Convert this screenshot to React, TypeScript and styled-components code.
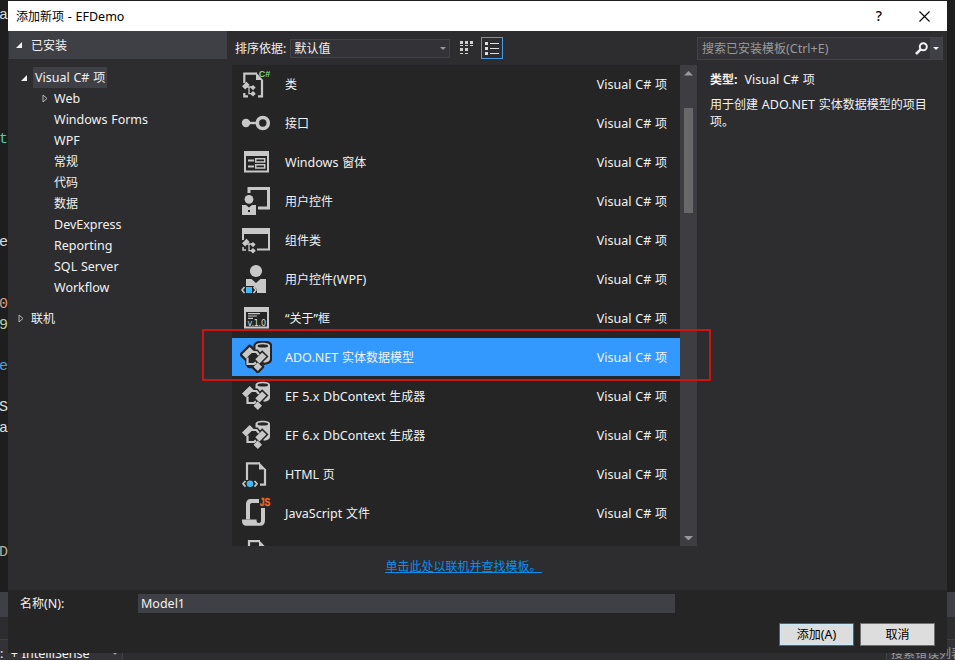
import React from "react";
import styled, { createGlobalStyle } from "styled-components";

const GlobalStyle = createGlobalStyle`
  * { box-sizing: border-box; }
  body {
    margin: 0;
    overflow: hidden;
    background: #1e1e1e;
    font-family: "Noto Sans", "Noto Sans CJK SC", sans-serif;
    font-size: 12px;
    color: #f1f1f1;
  }
`;

/* ---------- mixed-script text ---------- */

const Run = styled.span`
  white-space: pre;
`;
const Latin = styled.span`
  font-family: "Noto Sans", sans-serif;
  font-size: 12.5px;
  word-spacing: 0.5px;
  line-height: 1;
  white-space: pre;
`;
const Han = styled.span`
  font-family: "Noto Sans CJK SC", sans-serif;
  font-size: 12px;
  line-height: 1;
`;

function Label({ text }: { text: string }) {
  const parts = text.match(/[\u2e80-\uffef]+|[^\u2e80-\uffef]+/g) ?? [];
  return (
    <Run>
      {parts.map((p, i) =>
        /[\u2e80-\uffef]/.test(p) ? <Han key={i}>{p}</Han> : <Latin key={i}>{p}</Latin>
      )}
    </Run>
  );
}

/* ---------- editor behind the dialog ---------- */

const Screen = styled.div`
  position: relative;
  width: 955px;
  height: 660px;
  overflow: hidden;
  background: #1e1e1e;
  display: flex;
  flex-direction: column;
`;
const Editor = styled.div`
  height: 592px;
  padding-top: 6px;
  overflow: hidden;
`;
const CodeLine = styled.div<{ $color?: string }>`
  height: 20.65px;
  line-height: 20.65px;
  width: 8px;
  display: flex;
  justify-content: flex-end;
  font-family: "Liberation Mono", monospace;
  font-size: 15px;
  color: ${(p) => p.$color ?? "#dcdcdc"};
`;
const PaneHeader = styled.div`
  height: 25px;
  background: #3f3f46;
`;
const PaneToolbar = styled.div`
  height: 23px;
  background: #2d2d30;
  border-bottom: 1px solid #3f3f46;
`;
const PaneFilter = styled.div`
  flex: 1;
  display: flex;
  justify-content: space-between;
  background: #2d2d30;
  overflow: hidden;
`;
const FilterBox = styled.div<{ $w: number; $dim?: boolean }>`
  width: ${(p) => p.$w}px;
  height: 24px;
  display: flex;
  align-items: center;
  justify-content: space-between;
  padding: 2px 4px 0 ${(p) => (p.$dim ? 4 : 0)}px;
  overflow: hidden;
  background: #333337;
  border: solid #434346;
  border-width: ${(p) => (p.$dim ? "0 0 0 1px" : "0 1px 0 0")};
  color: ${(p) => (p.$dim ? "#999" : "#f1f1f1")};
`;

const CODE: Record<number, [string, string?]> = {
  0: ["a"],
  6: ["t", "#4ec9b0"],
  11: ["e"],
  14: ["0", "#d69d85"],
  15: ["9", "#b5cea8"],
  17: ["e", "#569cd6"],
  19: ["S"],
  20: ["a"],
  26: ["D", "#b0b09c"],
};

/* ---------- dialog ---------- */

const Dialog = styled.div`
  position: absolute;
  left: 8px;
  top: 1px;
  width: 939px;
  height: 652px;
  background: #2d2d30;
  display: flex;
  flex-direction: column;
`;
const TitleBar = styled.div`
  height: 30px;
  flex: none;
  display: flex;
  align-items: center;
  padding: 0 17px 0 8px;
  background: #fff;
  color: #000;
`;
const TitleText = styled.div`
  flex: 1;
`;
const HelpMark = styled.div`
  width: 12px;
  margin-right: 34px;
  padding-bottom: 2px;
  font: 500 14px "Noto Sans", sans-serif;
  text-align: center;
`;
const Body = styled.div`
  height: 559px;
  display: flex;
`;
const Sidebar = styled.div`
  width: 224px;
  padding-left: 1px;
`;
const SideHeader = styled.div`
  width: 218px;
  height: 28px;
  display: flex;
  align-items: center;
  gap: 9px;
  padding-left: 7px;
  background: #3f3f46;
`;
const Tree = styled.div`
  padding-top: 8px;
`;
const Node = styled.div<{ $indent: number; $gap?: number }>`
  height: 21px;
  margin-top: ${(p) => p.$gap ?? 0}px;
  padding-left: ${(p) => p.$indent}px;
  display: flex;
  align-items: center;
`;
const Twisty = styled.svg<{ $gap?: number }>`
  display: block;
  flex: none;
  margin-right: ${(p) => p.$gap ?? 0}px;
`;
const NodeText = styled.div<{ $active?: boolean }>`
  height: 21px;
  display: flex;
  align-items: center;
  padding: 0 2px;
  background: ${(p) => (p.$active ? "#3f3f46" : "transparent")};
`;

const Center = styled.div`
  width: 465px;
  display: flex;
  flex-direction: column;
`;
const SortBar = styled.div`
  height: 34px;
  display: flex;
  align-items: center;
  padding-left: 3px;
`;
const SortSelect = styled.div`
  width: 160px;
  height: 19px;
  margin: 1px 6px 0 4px;
  padding: 0 3px 0 3px;
  display: flex;
  align-items: center;
  justify-content: space-between;
  background: #333337;
  border: 1px solid #434346;
`;
const ViewButton = styled.div<{ $active?: boolean }>`
  width: 22px;
  height: 22px;
  margin-right: 3px;
  display: flex;
  align-items: center;
  justify-content: center;
  border: 1px solid ${(p) => (p.$active ? "#4a9be8" : "transparent")};
`;
const ListFrame = styled.div`
  height: 481px;
  display: flex;
  background: #252526;
`;
const List = styled.div`
  width: 448px;
  overflow: hidden;
`;
const Item = styled.div<{ $active?: boolean }>`
  height: 38px;
  margin-bottom: 1px;
  padding: 0 13px 0 8px;
  display: flex;
  align-items: center;
  background: ${(p) => (p.$active ? "#3399ff" : "transparent")};
`;
const Icon = styled.svg`
  width: 32px;
  height: 32px;
  flex: none;
  margin-right: 13px;
`;
const ItemName = styled.div`
  flex: 1;
`;
const ScrollBar = styled.div`
  width: 17px;
  display: flex;
  flex-direction: column;
  align-items: center;
  justify-content: space-between;
  padding: 6px 0;
  background: #3e3e42;
`;
const ScrollTrack = styled.div`
  flex: 1;
  width: 9px;
  padding-top: 32px;
`;
const ScrollThumb = styled.div`
  height: 105px;
  background: #686868;
`;
const OnlineLink = styled.a`
  align-self: center;
  margin: 12px 2px 0 0;
  height: 15px;
  line-height: 15px;
  color: #0e8ee9;
  border-bottom: 1px solid #0e8ee9;
  font-family: "Noto Sans CJK SC", sans-serif;
`;

const Details = styled.div`
  flex: 1;
`;
const SearchBox = styled.div`
  width: 246px;
  height: 23px;
  margin-top: 6px;
  display: flex;
  align-items: center;
  background: #333337;
  border: 1px solid #434346;
  color: #999;
`;
const SearchText = styled.div`
  flex: 1;
  padding-left: 4px;
`;
const SearchDrop = styled.div`
  width: 12px;
  height: 21px;
  margin-left: 2px;
  display: flex;
  align-items: center;
  justify-content: center;
  background: #3f3f46;
`;
const TypeLine = styled.div`
  margin: 10px 0 0 13px;
  height: 18px;
  display: flex;
  align-items: center;
  gap: 7px;
`;
const TypeKey = styled.div`
  font-weight: 700;
`;
const Description = styled.div`
  margin: 8px 0 0 13px;
`;
const DescLine = styled.div`
  height: 17px;
  display: flex;
  align-items: center;
`;

const Footer = styled.div`
  flex: 1;
  background: #252526;
  display: flex;
  flex-direction: column;
`;
const NameRow = styled.div`
  display: flex;
  align-items: center;
  padding: 4px 0 0 12px;
`;
const NameLabel = styled.div`
  width: 118px;
`;
const NameField = styled.div`
  width: 537px;
  height: 19px;
  display: flex;
  align-items: center;
  padding-left: 3px;
  background: #3f3f46;
`;
const Actions = styled.div`
  display: flex;
  justify-content: flex-end;
  gap: 6px;
  padding: 10px 12px 0 0;
`;
const Button = styled.button<{ $primary?: boolean }>`
  width: 75px;
  height: 23px;
  padding: 0;
  border: 1px solid ${(p) => (p.$primary ? "#0078d7" : "#707070")};
  background: #dddddd;
  box-shadow: ${(p) => (p.$primary ? "inset 0 0 0 1px #c9e8f8" : "none")};
  color: #000;
  line-height: 1;
`;
const Highlight = styled.div`
  position: absolute;
  left: 202px;
  top: 329px;
  width: 509px;
  height: 52px;
  border: 2px solid #cb1414;
`;

/* ---------- icons ---------- */

const G = "#c8c8c8";

const ClassShape = ({ dy = 0 }: { dy?: number }) => (
  <g transform={`translate(0 ${dy})`} fill={G}>
    <path d="M2 19.800 6.500 15.300l3.200 3.200L5.200 23z" />
    <path d="M13 18.500l2.600 2.600-2.600 2.600-2.600-2.600zM13 24.500l2.800 2.800-2.800 2.800-2.800-2.800z" />
    <path d="M7 20.500h5M9 20.500v6.700h3" fill="none" stroke={G} strokeWidth="1.300" />
  </g>
);

const modelBoxes = (
  <>
    <path d="M2 13.600 9.700 5.900l4 4L6 17.600z" />
    <path d="M15.300 18.300l6.900-6.900 4.200 4.200-6.900 6.900z" />
    <path d="M13.500 25.700l4.200-4.200 4.300 4.300-4.200 4.200z" />
  </>
);
const modelLinks = <path d="M11 11h5.500l2.500 3M7.500 16.500v6.500h6.500l2-1.500" fill="none" />;
const cylinder = (
  <path d="M15.500 4.700C15.500 3 18.700 1.700 22.800 1.700S30 3 30 4.700V18c0 2-2.500 3.300-6 3.700L15.500 13z" />
);

const Model = ({ outlined }: { outlined?: boolean }) => (
  <>
    {outlined && (
      <g fill="#252526" stroke="#252526" strokeWidth="4.400" strokeLinejoin="round">
        {cylinder}
        {modelBoxes}
        {modelLinks}
        <path d="M7 15h10v10H9z" />
      </g>
    )}
    <g fill={G}>{cylinder}</g>
    <ellipse cx="22.800" cy="4.900" rx="5.300" ry="1.700" fill="#252526" />
    <g fill="#252526" stroke="#252526" strokeWidth="3">
      {modelBoxes}
      <path d="M8 14h8v8H8z" stroke="none" />
      <path d="M11 11h5.500l2.500 3" fill="none" strokeWidth="5" />
    </g>
    <g fill={G}>{modelBoxes}</g>
    <g stroke={G} strokeWidth="2.200">
      {modelLinks}
    </g>
  </>
);

const icons: Record<string, React.ReactNode> = {
  class: (
    <>
      <path d="M4.300 15V5.700H17M22 12v16.300h-4M4.300 25v3.300H8" fill="none" stroke={G} strokeWidth="2.200" />
      <path d="M16 4.600 23.100 12H16z" fill={G} />
      <ClassShape dy={-1.500} />
      <text x="18.800" y="8.800" fill="#7fd67f" fontFamily="Liberation Sans" fontWeight="700" fontSize="9.500" textLength="11.500" lengthAdjust="spacingAndGlyphs">
        C#
      </text>
    </>
  ),
  interface: (
    <>
      <circle cx="6" cy="16" r="4.200" fill={G} />
      <path d="M9 16h8" stroke={G} strokeWidth="2.400" />
      <circle cx="22.800" cy="16" r="5.500" fill="none" stroke={G} strokeWidth="3.600" />
    </>
  ),
  form: (
    <>
      <path d="M4 5h25v21.500H4zM6 10v14.500h21V10z" fill={G} fillRule="evenodd" />
      <path d="M8 14.500h6M8 20.500h6" stroke={G} strokeWidth="2" />
      <path d="M15.700 12.700h9v3.300h-9zM15.700 18.700h9v3.300h-9z" fill="none" stroke={G} strokeWidth="1.500" />
    </>
  ),
  control: (
    <>
      <path d="M9 8V3.500h19.500V23H18" fill="none" stroke={G} strokeWidth="3" />
      <circle cx="9" cy="14.300" r="4.400" fill={G} />
      <path d="M2 20h4l3 2.500 3-2.500h4v10H2zM8 25v2h2v-2z" fill={G} fillRule="evenodd" />
    </>
  ),
  component: (
    <>
      <path d="M2 4h28v22.500H17v-2h11V10H4v6H2z" fill={G} />
      <path d="M3 23v3h3" fill="none" stroke={G} strokeWidth="1.500" />
      <ClassShape dy={-0.5} />
    </>
  ),
  wpf: (
    <>
      <circle cx="16" cy="8" r="6.100" fill={G} />
      <path d="M6 16h5.500l4.500 4 4.500-4H26v14H17v-3.500L13.500 23H6z" fill={G} />
      <path d="M6 24h6v6H6z" fill="#3fb8f5" />
      <path d="M4.500 24 2 27l2.500 3M13.500 24l2.500 3-2.500 3" fill="none" stroke={G} strokeWidth="1.600" />
    </>
  ),
  about: (
    <>
      <path d="M4 5h25v21.500H4zM6 10v14.500h21V10z" fill={G} fillRule="evenodd" />
      <path d="M8 11.700h12M8 14h9M8 16.300h5" stroke={G} strokeWidth="1.200" />
      <text x="7.500" y="23.700" fill="#dcdcdc" fontFamily="DejaVu Sans" fontSize="8" textLength="18.500">
        v.1.0
      </text>
    </>
  ),
  html: (
    <>
      <path d="M7 22V5.300h13M25 11v15.700h-5" fill="none" stroke={G} strokeWidth="2.200" />
      <path d="M19 4.200 26.100 11.500H19z" fill={G} />
      <circle cx="10" cy="25.800" r="3.300" fill="#3fb8f5" />
      <path d="M5.500 23 3 25.800l2.500 2.800M14.500 23l2.500 2.800-2.500 2.800" fill="none" stroke={G} strokeWidth="1.700" />
    </>
  ),
  js: (
    <>
      <path d="M6 18V7c0-3 1.500-5 4.500-5H19v4h-7c-1.500 0-2 1-2 2v10z" fill={G} />
      <path d="M21 11h4v12.500c0 3.500-2 5.300-4.500 5.300H6.500C3.500 28.800 2 27 2 24v-1.500h14.500c0 2 .500 3.500 2.300 3.500s2.200-1.300 2.200-3z" fill={G} />
      <path d="M6 16h4v6.500H6z" fill={G} />
      <text x="19.800" y="9.300" fill="#f26b21" stroke="#f26b21" strokeWidth="0.300" fontFamily="Liberation Sans" fontWeight="700" fontSize="10" textLength="10.500" lengthAdjust="spacingAndGlyphs">
        JS
      </text>
    </>
  ),
  ado: <Model outlined />,
  ef: <Model />,
  page: (
    <>
      <path d="M9 22V5.200h11M25 11v11" fill="none" stroke={G} strokeWidth="2.200" />
      <path d="M19 4.100 26.100 11.500H19z" fill={G} />
    </>
  ),
};

const ITEMS: [string, string][] = [
  ["class", "类"],
  ["interface", "接口"],
  ["form", "Windows 窗体"],
  ["control", "用户控件"],
  ["component", "组件类"],
  ["wpf", "用户控件(WPF)"],
  ["about", "“关于”框"],
  ["ado", "ADO.NET 实体数据模型"],
  ["ef", "EF 5.x DbContext 生成器"],
  ["ef", "EF 6.x DbContext 生成器"],
  ["html", "HTML 页"],
  ["js", "JavaScript 文件"],
];

const CHILDREN = ["Windows Forms", "WPF", "常规", "代码", "数据", "DevExpress", "Reporting", "SQL Server", "Workflow"];

const Open = ({ gap }: { gap?: number }) => (
  <Twisty $gap={gap} width="6" height="6" viewBox="0 0 6 6">
    <path d="M6 0v6H0z" fill="#f1f1f1" />
  </Twisty>
);
const Closed = ({ gap }: { gap?: number }) => (
  <Twisty $gap={gap} width="6" height="9" viewBox="0 0 6 9">
    <path d="M1 1v7l4-3.500z" fill="none" stroke="#b5b5b5" />
  </Twisty>
);
const Caret = ({ w = 6, color = "#999", up = false }: { w?: number; color?: string; up?: boolean }) => (
  <svg width={w} height={w / 2} viewBox="0 0 6 3">
    <path d={up ? "M0 3h6L3 0z" : "M0 0h6L3 3z"} fill={color} />
  </svg>
);

export default function App() {
  return (
    <Screen>
      <GlobalStyle />
      <Editor>
        {Array.from({ length: 27 }, (_, i) => (
          <CodeLine key={i} $color={CODE[i]?.[1]}>
            {CODE[i]?.[0]}
          </CodeLine>
        ))}
      </Editor>
      <PaneHeader />
      <PaneToolbar />
      <PaneFilter>
        <FilterBox $w={123}>
          <Label text=":  + IntelliSense" />
          <Caret />
        </FilterBox>
        <FilterBox $w={69} $dim>
          <Label text="搜索错误列表" />
        </FilterBox>
      </PaneFilter>

      <Dialog>
        <TitleBar>
          <TitleText>
            <Label text="添加新项 - EFDemo" />
          </TitleText>
          <HelpMark>?</HelpMark>
          <svg width="11" height="11" viewBox="0 0 11 11">
            <path d="M.5.5l10 10M10.500.5l-10 10" stroke="#000" strokeWidth="1.100" />
          </svg>
        </TitleBar>

        <Body>
          <Sidebar>
            <SideHeader>
              <Open />
              <Label text="已安装" />
            </SideHeader>
            <Tree>
              <Node $indent={12}>
                <Open gap={6} />
                <NodeText $active>
                  <Label text="Visual C# 项" />
                </NodeText>
              </Node>
              <Node $indent={33}>
                <Closed gap={4} />
                <NodeText>
                  <Label text="Web" />
                </NodeText>
              </Node>
              {CHILDREN.map((c) => (
                <Node key={c} $indent={43}>
                  <NodeText>
                    <Label text={c} />
                  </NodeText>
                </Node>
              ))}
              <Node $indent={9} $gap={10}>
                <Closed gap={5} />
                <NodeText>
                  <Label text="联机" />
                </NodeText>
              </Node>
            </Tree>
          </Sidebar>

          <Center>
            <SortBar>
              <Label text="排序依据:" />
              <SortSelect>
                <Label text="默认值" />
                <Caret />
              </SortSelect>
              <ViewButton>
                <svg width="14" height="14" viewBox="0 0 14 14" fill="#d0d0d0">
                  <path d="M0 0h3v3H0zM5 0h3v3H5zM10 0h3v3h-3zM0 7h3v3H0zM5 7h3v3H5zM0 4h3v1H0zM5 4h3v1H5zM10 4h3v1h-3zM0 12h3v1H0zM5 12h3v1H5z" />
                </svg>
              </ViewButton>
              <ViewButton $active>
                <svg width="14" height="13" viewBox="0 0 14 13" fill="#e0e0e0">
                  <path d="M0 0h3v3H0zM0 5h3v3H0zM0 10h3v3H0zM5 1h9v1H5zM5 6h9v1H5zM5 11h9v1H5z" />
                </svg>
              </ViewButton>
            </SortBar>
            <ListFrame>
              <List>
                {ITEMS.map(([icon, name]) => (
                  <Item key={name} $active={icon === "ado"}>
                    <Icon viewBox="0 0 32 32">{icons[icon]}</Icon>
                    <ItemName>
                      <Label text={name} />
                    </ItemName>
                    <Label text="Visual C# 项" />
                  </Item>
                ))}
                <Item>
                  <Icon viewBox="0 0 32 32">{icons.page}</Icon>
                </Item>
              </List>
              <ScrollBar>
                <Caret w={9} up />
                <ScrollTrack>
                  <ScrollThumb />
                </ScrollTrack>
                <Caret w={9} />
              </ScrollBar>
            </ListFrame>
            <OnlineLink>单击此处以联机并查找模板。</OnlineLink>
          </Center>

          <Details>
            <SearchBox>
              <SearchText>
                <Label text="搜索已安装模板(Ctrl+E)" />
              </SearchText>
              <svg width="13" height="13" viewBox="0 0 13 13">
                <circle cx="8.300" cy="4.700" r="3.500" fill="none" stroke="#f1f1f1" strokeWidth="2" />
                <path d="M5.700 7.300 1 12" stroke="#f1f1f1" strokeWidth="2.600" />
              </svg>
              <SearchDrop>
                <Caret color="#f1f1f1" />
              </SearchDrop>
            </SearchBox>
            <TypeLine>
              <TypeKey>
                <Label text="类型:" />
              </TypeKey>
              <Label text="Visual C# 项" />
            </TypeLine>
            <Description>
              <DescLine>
                <Label text="用于创建 ADO.NET 实体数据模型的项目" />
              </DescLine>
              <DescLine>
                <Label text="项。" />
              </DescLine>
            </Description>
          </Details>
        </Body>

        <Footer>
          <NameRow>
            <NameLabel>
              <Label text="名称(N):" />
            </NameLabel>
            <NameField>
              <Label text="Model1" />
            </NameField>
          </NameRow>
          <Actions>
            <Button $primary>
              <Label text="添加(A)" />
            </Button>
            <Button>
              <Label text="取消" />
            </Button>
          </Actions>
        </Footer>
      </Dialog>
      <Highlight />
    </Screen>
  );
}
